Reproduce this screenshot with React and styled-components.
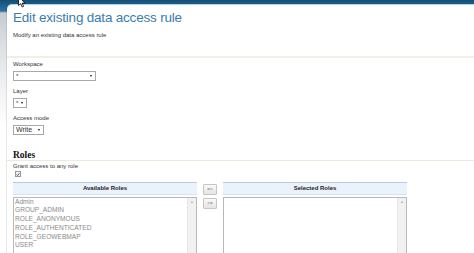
import React from 'react';
import styled, { createGlobalStyle } from 'styled-components';

const Global = createGlobalStyle`
  html, body { margin: 0; padding: 0; background: #fff; }
  body { font-family: "Liberation Sans", Arial, sans-serif; overflow: hidden; }
  * { box-sizing: border-box; }
`;

const Page = styled.div`
  position: relative;
  width: 474px;
  height: 253px;
  overflow: hidden;
  padding: 4px 0 0 7px;
  background: linear-gradient(180deg, #154d75 0, #1c5d89 4px, #2a72a4 11px, #c6ccd2 13px, #e2e5e8 55px, #f5f6f7 100px, #fff 125px);
`;

const Panel = styled.main`
  min-height: 260px;
  background: #fff;
  border-top: 1px solid #a7d3f0;
  border-top-left-radius: 5px;
  padding: 5px 0 0 6px;
  box-shadow: -1px 0 1px rgba(0, 0, 0, 0.1);
`;

const Header = styled.header`
  margin-left: -6px;
  padding: 0 0 17px 6px;
  border-bottom: 2px solid #f0efe8;
`;

const Title = styled.h1`
  margin: 0;
  font-size: 13.5px;
  letter-spacing: -0.2px;
  line-height: 16px;
  font-weight: normal;
  color: #3b7cab;
`;

const Subtitle = styled.p`
  margin: 5px 0 0;
  font-size: 6px;
  line-height: 8px;
  color: #333;
`;

const Form = styled.section`
  padding-top: 2px;
`;

const Field = styled.div`
  margin-top: ${(p) => (p.$first ? 0 : 6)}px;
`;

const Label = styled.label`
  display: block;
  font-size: 6px;
  line-height: 8px;
  color: #333;
`;

const Select = styled.div`
  margin-top: 3px;
  width: ${(p) => p.$w}px;
  height: 10px;
  border: 1px solid #a8a8a8;
  background: #fff;
  display: flex;
  align-items: center;
  justify-content: space-between;
  padding: 0 3px 0 2px;
  font-size: ${(p) => p.$fs || 6}px;
  color: #333;
  line-height: 8px;
`;

const Arrow = styled.span`
  width: 0;
  height: 0;
  border-left: 1.6px solid transparent;
  border-right: 1.6px solid transparent;
  border-top: 2.4px solid #111;
`;

const RolesHeading = styled.h2`
  margin: 14.5px 0 0 -6px;
  padding-left: 6px;
  font-family: "Liberation Serif", "Times New Roman", serif;
  font-size: 9.5px;
  line-height: 10px;
  font-weight: bold;
  color: #111;
  border-bottom: 1px solid #eceadf;
`;

const Grant = styled.div`
  margin-top: 1px;
  font-size: 6px;
  line-height: 8px;
  color: #333;
`;

const Check = styled.span`
  display: flex;
  align-items: center;
  justify-content: center;
  width: 6px;
  height: 6px;
  margin: 1.5px 0 0 2px;
  border: 1px solid #9a9a9a;
  background: #f1f1f1;
`;

const Roles = styled.div`
  display: flex;
  align-items: flex-start;
  margin-top: 5px;
`;

const Column = styled.div`
  width: 184px;
  flex: none;
`;

const ColHeader = styled.div`
  height: 13px;
  border-top: 1px solid #b8cce2;
  border-bottom: 1px solid #d3e3f3;
  background: #eaf3fc;
  text-align: center;
  font-size: 6px;
  font-weight: bold;
  line-height: 11px;
  color: #222;
`;

const ListBox = styled.div`
  margin-top: 1.5px;
  height: 62px;
  border: 1px solid #b8b8b8;
  background: #fff;
  display: flex;
`;

const Items = styled.div`
  flex: 1;
  padding-left: 1px;
`;

const Item = styled.div`
  font-size: 6.6px;
  line-height: 8.8px;
  color: #8a8a8a;
  white-space: nowrap;
`;

const Scrollbar = styled.div`
  width: 9px;
  flex: none;
  background: #f1f1f1;
  border-left: 1px solid #e6e6e6;
  display: flex;
  justify-content: center;
  padding-top: 3px;
`;

const UpArrow = styled.span`
  width: 0;
  height: 0;
  border-left: 1.5px solid transparent;
  border-right: 1.5px solid transparent;
  border-bottom: 2px solid #a0a0a0;
`;

const Buttons = styled.div`
  display: flex;
  flex-direction: column;
  gap: 3px;
  margin: 0 6px;
  padding-top: 1.5px;
`;

const MoveButton = styled.button`
  width: 14px;
  height: 11px;
  padding: 0;
  border: 1px solid #c6c6c6;
  border-radius: 1px;
  background: linear-gradient(#f9f9f9, #e5e5e5);
  font-family: "Liberation Sans", Arial, sans-serif;
  font-size: 4.5px;
  line-height: 9px;
  color: #777;
`;

const Cursor = styled.svg`
  position: absolute;
  left: 18px;
  top: -4px;
`;

const availableRoles = ['Admin', 'GROUP_ADMIN', 'ROLE_ANONYMOUS', 'ROLE_AUTHENTICATED', 'ROLE_GEOWEBMAP', 'USER'];

function RoleList({ title, items }) {
  return (
    <Column>
      <ColHeader>{title}</ColHeader>
      <ListBox>
        <Items>
          {items.map((r) => (
            <Item key={r}>{r}</Item>
          ))}
        </Items>
        <Scrollbar>
          <UpArrow />
        </Scrollbar>
      </ListBox>
    </Column>
  );
}

export default function App() {
  return (
    <Page>
      <Global />
      <Panel>
        <Header>
          <Title>Edit existing data access rule</Title>
          <Subtitle>Modify an existing data access rule</Subtitle>
        </Header>
        <Form>
          <Field $first>
            <Label>Workspace</Label>
            <Select $w={83}>
              <span>*</span>
              <Arrow />
            </Select>
          </Field>
          <Field>
            <Label>Layer</Label>
            <Select $w={14}>
              <span>*</span>
              <Arrow />
            </Select>
          </Field>
          <Field>
            <Label>Access mode</Label>
            <Select $w={31} $fs={7}>
              <span>Write</span>
              <Arrow />
            </Select>
          </Field>
        </Form>
        <RolesHeading>Roles</RolesHeading>
        <Grant>Grant access to any role</Grant>
        <Check>
          <svg width="5" height="5" viewBox="0 0 5 5">
            <path d="M0.7 2.6 L1.9 3.8 L4.3 1" fill="none" stroke="#222" strokeWidth="0.9" />
          </svg>
        </Check>
        <Roles>
          <RoleList title="Available Roles" items={availableRoles} />
          <Buttons>
            <MoveButton>=&gt;</MoveButton>
            <MoveButton>&lt;=</MoveButton>
          </Buttons>
          <RoleList title="Selected Roles" items={[]} />
        </Roles>
      </Panel>
      <Cursor width="8" height="12" viewBox="0 0 8 12">
        <path d="M0.5 0.5 L0.5 9.5 L2.7 7.6 L4.2 11 L5.6 10.4 L4.2 7.1 L7 7.1 Z" fill="#fff" stroke="#000" strokeWidth="0.8" />
      </Cursor>
    </Page>
  );
}
